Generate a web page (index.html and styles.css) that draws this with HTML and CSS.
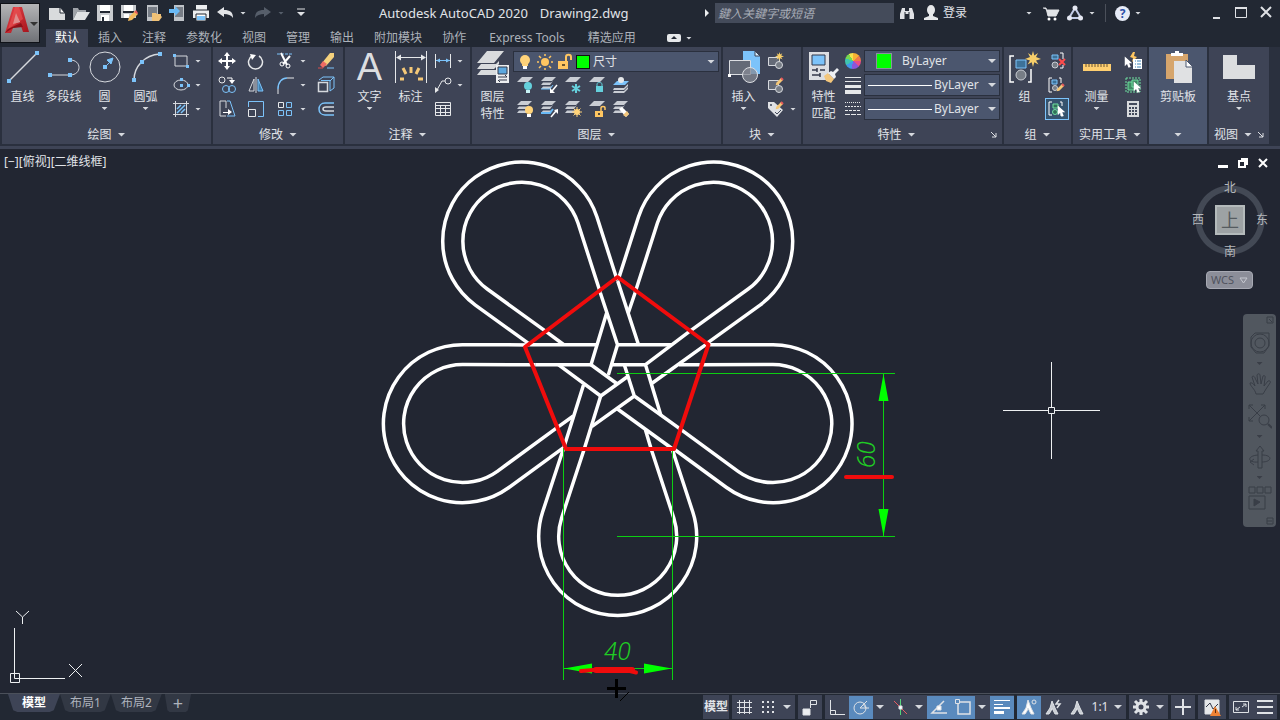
FILE: index.html
```html
<!DOCTYPE html>
<html lang="zh-CN">
<head>
    <meta charset="UTF-8">
    <title>Autodesk AutoCAD 2020 - Drawing2.dwg</title>
    <link rel="stylesheet" href="styles.css">
</head>
<body>
    <!-- Shared shapes -->
    <svg class="defs" aria-hidden="true">
        <defs>
            <linearGradient id="logoRed" x1="0" y1="0" x2="1" y2="1">
                <stop offset="0" stop-color="#e8444a"/>
                <stop offset="1" stop-color="#a5141c"/>
            </linearGradient>
            <symbol id="sheet" viewBox="0 0 18 18"><path d="M7 3h10l-4 5H3z" fill="#c9cdd4"/></symbol>
            <symbol id="sheets" viewBox="0 0 18 18">
                <path d="M5 1h11l-4 4H1zM3 6.500h8l2-1.500-3 4H1zM3 10.500h8l2-1.500-3 4H1z" fill="#c9cdd4"/>
            </symbol>
            <symbol id="pencil" viewBox="0 0 18 18">
                <path d="M4 14l1-4 7-7 3 3-7 7z" fill="#f5c877"/>
                <path d="M11 4l2-2 3 3-2 2z" fill="#e85c5c"/>
            </symbol>
            <symbol id="cursor" viewBox="0 0 12 16"><path d="M1 0v13l3-3 2 5 3-1-2-5h4z" fill="#fff"/></symbol>
            <symbol id="burst" viewBox="0 0 16 16">
                <path d="M8 0l1.300 4.500L13 2l-2 4 5 2-5 1.500 2.500 4-4.200-2.300L8 16l-1.300-4.800-4.200 2.300 2.500-4L0 8l5-2-2-4 3.700 2.500z" fill="#f8cf6a"/>
            </symbol>
            <symbol id="brush" viewBox="0 0 18 18">
                <path d="M2 10l4-3 6 6-3 4-5-2z" fill="#f3c67b"/>
                <path d="M6 7l3-2 2 1 4-4 2 2-4 4 1 3-2 2z" fill="#eef0f3"/>
            </symbol>
        </defs>
    </svg>

    <header class="header">
        <button class="app-button" aria-label="应用程序菜单">
            <svg width="38" height="38" viewBox="0 0 38 38">
                <path d="M12 3h9l7 25h-6l-2-6-8 2-2 5H4z" fill="url(#logoRed)"/>
                <path d="M15 9l-3 11 7-2z" fill="#c9c9c9"/>
                <path d="M14 3l-7 22 15-10-4-12z" fill="#f05a5a" opacity=".55"/>
                <path d="M7 25l13-6 2 4-10 1-8 5z" fill="#8e1118"/>
                <path d="M29 18h8l-4 4z" fill="#333"/>
            </svg>
        </button>
        <div class="header-main">
            <div class="titlebar">
                <div class="quick">
                    <button aria-label="新建"><svg viewBox="0 0 18 18"><path d="M1 4h11l5 5v7H1z" fill="#d9dbdd"/><path d="M12 3v6h5z" fill="#f5f5f5" stroke="#222833"/></svg></button>
                    <button aria-label="打开"><svg viewBox="0 0 18 18"><path d="M1 16V4h5l1 2h7v2H5z" fill="#9fa3a9"/><path d="M5 8h13l-5 8H1z" fill="#e0e2e4"/></svg></button>
                    <button aria-label="保存"><svg viewBox="0 0 18 18"><path d="M1 1h16v16H1z" fill="#c8cbcf"/><path d="M4 1h10v6H4zM5 11h8v6H5z" fill="#fff"/><path d="M4 8h10M7 13v4" stroke="#222833" stroke-width="2"/></svg></button>
                    <button aria-label="另存为"><svg viewBox="0 0 18 18"><path d="M1 1h15v13H1z" fill="#c8cbcf"/><path d="M4 1h9v6H4zM4 10h5v4H4z" fill="#fff"/><path d="M3 8h11" stroke="#222833" stroke-width="2"/><path d="M8 17l1-4 6-6 3 3-6 6z" fill="#f3b95d"/><path d="M14 8l2-2 2 3-1 1z" fill="#e85c5c"/></svg></button>
                    <button aria-label="从移动设备打开"><svg viewBox="0 0 18 18"><path d="M3 1h11v16H3z" fill="#bfc3c8"/><path d="M4 3h9v10H4z" fill="#777d86"/><path d="M8 17V9h4l1 1h4v2l1 1-3 4z" fill="#f0c177"/></svg></button>
                    <button aria-label="保存到移动设备"><svg viewBox="0 0 18 18"><path d="M6 1h10v16H6z" fill="#bfc3c8"/><path d="M7 3h8v10H7z" fill="#777d86"/><path d="M1 5h6V2l5 5-5 5V9H1z" fill="#69b9f5"/></svg></button>
                    <button aria-label="打印"><svg viewBox="0 0 18 18"><path d="M4 1h11v5H4zM1 6h16v8H1z" fill="#eceef0"/><path d="M1 6h16" stroke="#222833"/><path d="M4 10h10v7H4z" fill="#fff" stroke="#222833"/><path d="M5 12h8v4H5z" fill="#7cc3fa"/></svg></button>
                    <button aria-label="放弃"><svg viewBox="0 0 18 18"><path d="M1 8l7-5v3c6 0 9 2 9 8-2-3-5-4-9-4v3z" fill="#e3e5e8"/></svg></button>
                    <i class="caret"></i>
                    <button aria-label="重做"><svg viewBox="0 0 18 18"><path d="M17 8l-7-5v3C4 6 1 8 1 14c2-3 5-4 9-4v3z" fill="#565e6a"/></svg></button>
                    <i class="caret dim"></i>
                    <button aria-label="自定义快速访问工具栏"><svg viewBox="0 0 18 18"><path d="M5 5h8" stroke="#dfe1e5" stroke-width="1"/><path d="M5 8h8l-4 4z" fill="#dfe1e5"/></svg></button>
                </div>
                <div class="doc-title"><span>Autodesk AutoCAD 2020</span><span>Drawing2.dwg</span></div>
                <div class="search">
                    <i class="caret-right"></i>
                    <input type="text" placeholder="鍵入关鍵字或短语" aria-label="搜索">
                    <button aria-label="查找"><svg width="16" height="18" viewBox="0 0 16 18"><path d="M3 4h3v3h4V4h3l2 6v5h-5v-5H6v5H1v-5z" fill="#dfe1e5"/><path d="M6 8v7M10 8v7" stroke="#222833"/></svg></button>
                    <button class="login"><svg width="16" height="18" viewBox="0 0 16 18"><ellipse cx="8" cy="6" rx="4" ry="5" fill="#e6e8ea"/><path d="M6 9h4v3l5 2v2H1v-2l5-2z" fill="#e6e8ea"/></svg>登录</button>
                </div>
                <div class="account">
                    <i class="caret"></i>
                    <button aria-label="应用商店"><svg viewBox="0 0 18 18"><path d="M1 4h3l2 8h8l3-6H5" fill="#e2e4e7" stroke="#e2e4e7"/><circle cx="7" cy="15" r="1.500" fill="#fff"/><circle cx="13" cy="15" r="1.500" fill="#fff"/></svg></button>
                    <button aria-label="Autodesk A360"><svg viewBox="0 0 18 18"><path d="M9 4L3 14h12z" fill="none" stroke="#c2cbe8" stroke-width="2"/><circle cx="9" cy="4" r="2.500" fill="#e6e9f3"/><circle cx="3.500" cy="14" r="2.500" fill="#e6e9f3"/><circle cx="14.500" cy="14" r="2.500" fill="#e6e9f3"/></svg></button>
                    <i class="caret"></i>
                    <span class="divider"></span>
                    <button class="help" aria-label="帮助"><span>?</span></button>
                    <i class="caret"></i>
                </div>
                <div class="window-buttons">
                    <button aria-label="最小化"><svg viewBox="0 0 16 16"><path d="M5 13h7" stroke="#dfe1e5" stroke-width="2"/></svg></button>
                    <button aria-label="最大化"><svg viewBox="0 0 16 16"><path d="M2.500 3.500h11v9h-11z" fill="none" stroke="#dfe1e5"/><path d="M2 3h12" stroke="#dfe1e5" stroke-width="2"/></svg></button>
                    <button aria-label="关闭"><svg viewBox="0 0 16 16"><path d="M3 2l10 10M13 2L3 12" stroke="#dfe1e5" stroke-width="2"/></svg></button>
                </div>
            </div>
            <nav class="tabs">
                <a class="active" href="#">默认</a>
                <a href="#">插入</a>
                <a href="#">注释</a>
                <a href="#">参数化</a>
                <a href="#">视图</a>
                <a href="#">管理</a>
                <a href="#">输出</a>
                <a href="#">附加模块</a>
                <a href="#">协作</a>
                <a class="latin" href="#">Express Tools</a>
                <a href="#">精选应用</a>
                <button class="ribbon-toggle" aria-label="最小化功能区"><svg width="14" height="8" viewBox="0 0 14 8"><rect width="14" height="8" rx="2" fill="#e6e8ea"/><path d="M4 5h6L7 2z" fill="#222833"/></svg><i class="caret"></i></button>
            </nav>
        </div>
    </header>

    <div class="ribbon">
        <section class="panel">
            <div class="panel-body">
                <button class="big"><svg viewBox="0 0 32 32"><path d="M2 30L30 2" stroke="#d6d9de" stroke-width="1.500"/><path d="M0 28h4v4H0zM28 0h4v4h-4z" fill="#7cc3fa"/></svg>直线</button>
                <button class="big"><svg viewBox="0 0 32 32"><path d="M2 24h20M22 9c12 0 12 15 0 15" fill="none" stroke="#d6d9de"/><path d="M0 22h4v4H0zM20 22h4v4h-4zM20 7h4v4h-4z" fill="#7cc3fa"/></svg>多段线</button>
                <button class="big"><svg viewBox="0 0 32 32"><circle cx="16" cy="16" r="15" fill="none" stroke="#d6d9de"/><path d="M16 16l7-7M24 7l-2 6-4-4z" stroke="#7cc3fa" fill="#7cc3fa"/><path d="M14 14h4v4h-4z" fill="#7cc3fa"/></svg>圆<i class="caret"></i></button>
                <button class="big"><svg viewBox="0 0 32 32"><path d="M4 29C4 16 14 4 30 3" fill="none" stroke="#d6d9de" stroke-width="1.500"/><path d="M2 27h4v4H2zM10 9h4v4h-4zM28 1h4v4h-4z" fill="#7cc3fa"/></svg>圆弧<i class="caret"></i></button>
                <div class="tools wide">
                    <button aria-label="矩形"><svg viewBox="0 0 18 18"><path d="M3 4h12v10H3z" fill="none" stroke="#d6d9de"/><path d="M1 2h3v3H1zM14 13h3v3h-3z" fill="#7cc3fa"/></svg></button><i class="caret"></i>
                    <button aria-label="椭圆"><svg viewBox="0 0 18 18"><ellipse cx="9" cy="9" rx="7" ry="5" fill="none" stroke="#d6d9de"/><path d="M8 2h3v3H8zM8 8h3v3H8zM15 8h3v3h-3z" fill="#7cc3fa"/></svg></button><i class="caret"></i>
                    <button aria-label="图案填充"><svg viewBox="0 0 18 18"><path d="M3.500 1v16M14.500 1v16M1 3.500h16M1 14.500h16" stroke="#d6d9de"/><path d="M5 9l4-4M5 13l8-8M9 13l4-4" stroke="#7cc3fa" stroke-width="1.500"/></svg></button><i class="caret"></i>
                </div>
            </div>
            <button class="panel-title">绘图<i class="caret lg"></i></button>
        </section>

        <section class="panel">
            <div class="panel-body">
                <div class="tools modify">
                    <button aria-label="移动"><svg viewBox="0 0 18 18"><path d="M9 3v12M3 9h12" stroke="#fff" stroke-width="2"/><path d="M9 0l3 4H6zM9 18l3-4H6zM0 9l4-3v6zM18 9l-4-3v6z" fill="#fff"/></svg></button>
                    <button aria-label="旋转"><svg viewBox="0 0 18 18"><path d="M12 4a7 7 0 1 1-7 0" fill="none" stroke="#e6e8ea" stroke-width="1.500"/><path d="M3 2l6 1-4 5z" fill="#fff"/></svg></button>
                    <button aria-label="修剪"><svg viewBox="0 0 18 18"><path d="M1 2h16" stroke="#7cc3fa" stroke-dasharray="3 1"/><path d="M5 1l6 12M14 4L7 12" stroke="#fff" stroke-width="2"/><circle cx="12" cy="14" r="2" fill="none" stroke="#fff"/><circle cx="6" cy="12" r="2" fill="none" stroke="#fff"/></svg></button>
                    <i class="caret"></i>
                    <button aria-label="删除"><svg viewBox="0 0 18 18"><path d="M5 11l8-10h4v4L9 14z" fill="#f5d27d"/><path d="M6 9l-3 4 3 3 4-4z" fill="#ef6b64"/><path d="M1 16h5" stroke="#d94d4d"/><path d="M10 16h7" stroke="#7cc3fa"/></svg></button>

                    <button aria-label="复制"><svg viewBox="0 0 18 18"><g fill="none"><circle cx="4" cy="4" r="3" stroke="#e6e8ea"/><circle cx="8" cy="13" r="3.500" stroke="#7cc3fa"/><circle cx="14" cy="13" r="3.500" stroke="#7cc3fa"/><path d="M9 2h5v3" stroke="#fff"/></g><path d="M11 4h6l-3 4z" fill="#fff"/></svg></button>
                    <button aria-label="镜像"><svg viewBox="0 0 18 18"><path d="M7 3v12H2z" fill="none" stroke="#d6d9de"/><path d="M11 3v12h5z" fill="#3f7fae" stroke="#7cc3fa"/><path d="M9 1v16" stroke="#d6d9de"/></svg></button>
                    <button aria-label="圆角"><svg viewBox="0 0 18 18"><path d="M2 13C2 6 6 2 11 2" fill="none" stroke="#7cc3fa" stroke-width="1.500"/><path d="M2 13v5M11 2h7" stroke="#e6e8ea"/></svg></button>
                    <i class="caret"></i>
                    <button aria-label="分解"><svg viewBox="0 0 18 18"><path d="M1.500 6.500h9v9h-9z" fill="none" stroke="#d6d9de" stroke-width="1.500"/><path d="M2 4l4-3h11v11l-4 3V5l4-4M4 4.500h9" fill="none" stroke="#7cc3fa"/></svg></button>

                    <button aria-label="拉伸"><svg viewBox="0 0 18 18"><path d="M8 1H2v15h6M8 1v7" fill="none" stroke="#d6d9de"/><path d="M9 1h3l5 15H9" fill="none" stroke="#7cc3fa"/><path d="M5 12h5V9l4 3-4 3v-2H5z" fill="#fff"/></svg></button>
                    <button aria-label="缩放"><svg viewBox="0 0 18 18"><path d="M1.500 9.500h7v7h-7z" fill="none" stroke="#e6e8ea"/><path d="M1.500 7V1.500h15v15H11" fill="none" stroke="#7cc3fa"/></svg></button>
                    <button aria-label="阵列"><svg viewBox="0 0 18 18"><g fill="none"><path d="M2.500 2.500h5v5h-5z" stroke="#e6e8ea"/><path d="M10.500 2.500h5v5h-5zM2.500 10.500h5v5h-5zM10.500 10.500h5v5h-5z" stroke="#7cc3fa"/></g></svg></button>
                    <i class="caret"></i>
                    <button aria-label="偏移"><svg viewBox="0 0 18 18"><path d="M17 3H8C0 3 0 15 8 15h9" fill="none" stroke="#7cc3fa" stroke-width="1.500"/><path d="M17 7H9c-4 0-4 4 0 4h8" fill="none" stroke="#d6d9de" stroke-width="1.500"/></svg></button>
                </div>
            </div>
            <button class="panel-title">修改<i class="caret lg"></i></button>
        </section>

        <section class="panel">
            <div class="panel-body annotate">
                <button class="big"><span class="big-a">A</span>文字<i class="caret"></i></button>
                <button class="big"><svg viewBox="0 0 32 32"><path d="M.5 0v32M31.500 0v32M2 6.500h28" stroke="#e6e8ea"/><path d="M1 6.500l5-3v6zM31 6.500l-5-3v6z" fill="#e6e8ea"/><path d="M16 22v-6M11 23l-3-6M21 23l3-6M9 28H5M23 28h5" stroke="#f5c877" stroke-width="3"/></svg>标注</button>
                <div class="tools wide">
                    <button aria-label="线性"><svg viewBox="0 0 18 18"><path d="M1.500 2v14M16.500 2v14" stroke="#e6e8ea"/><path d="M2 8.500h14" stroke="#7cc3fa"/><path d="M2 8.500l4-2v4zM16 8.500l-4-2v4z" fill="#7cc3fa"/></svg></button><i class="caret"></i>
                    <button aria-label="引线"><svg viewBox="0 0 18 18"><circle cx="14" cy="5" r="3" fill="none" stroke="#e6e8ea"/><path d="M11 5H8l-5 9" fill="none" stroke="#e6e8ea"/><path d="M1 17V11l4 3z" fill="#e6e8ea"/></svg></button><i class="caret"></i>
                    <button aria-label="表格"><svg viewBox="0 0 18 18"><path d="M1.500 2.500h15v13h-15zM2 5.500h14M2 8.500h14M2 12.500h14M6.500 6v10M11.500 6v10" fill="none" stroke="#e6e8ea"/></svg></button>
                </div>
            </div>
            <button class="panel-title">注释<i class="caret lg"></i></button>
        </section>

        <section class="panel">
            <div class="panel-body layers">
                <button class="big"><svg viewBox="0 0 32 32"><path d="M10 0h17L17 12H0zM4 13h15l3-3v3l-5 5H0zM4 19h15v5H0z" fill="#d9dbdd"/><path d="M19 14h13v18H19z" fill="#eceef0"/><path d="M21 16h9v7h-9z" fill="#5da8df" stroke="#33394a"/><path d="M21 26h9M22 29h8M28 24l2 2M23 31l-2-2" stroke="#33394a"/></svg>图层<br>特性</button>
                <div class="layer-tools">
                    <label class="combo">
                        <svg width="16" height="18" viewBox="0 0 16 18"><circle cx="8" cy="7" r="5" fill="#ffd37a"/><path d="M5 10h6v3H5z" fill="#ffd37a"/><path d="M6 13h4v3H6z" fill="#fff"/></svg>
                        <svg width="18" height="18" viewBox="0 0 18 18"><circle cx="9" cy="9" r="4" fill="#ffc661"/><path d="M9 1v2M9 15v2M1 9h2M15 9h2M3 3l2 2M13 13l2 2M15 3l-2 2M3 15l2-2" stroke="#ffc661" stroke-width="1.500"/></svg>
                        <svg width="16" height="18" viewBox="0 0 16 18"><path d="M9 9V4c0-3 5-3 5 0v3" fill="none" stroke="#ffc661" stroke-width="2"/><path d="M1 8h10v8H1z" fill="#ffc661"/><path d="M5 11h3v2H5z" fill="#6b5530"/></svg>
                        <span class="swatch"></span>
                        <select aria-label="图层"><option>尺寸</option></select>
                        <i class="caret lg"></i>
                    </label>
                    <div class="tools layer-grid">
                        <button aria-label="关"><svg viewBox="0 0 18 18"><path d="M6 1h11l-5 5H1z" fill="#c9cdd4"/><circle cx="12" cy="10" r="4" fill="#65d0dc"/><path d="M10 14h4v3h-4z" fill="#c8f3f6"/></svg></button>
                        <button aria-label="隔离"><svg viewBox="0 0 18 18"><use href="#sheets"/><path d="M1 13h9l3-4" fill="none" stroke="#69b9f5"/><path d="M17 9l-5 6" stroke="#fff" stroke-width="1.500"/><path d="M10 12v5h5z" fill="#fff"/></svg></button>
                        <button aria-label="冻结"><svg viewBox="0 0 18 18"><path d="M6 1h11l-5 5H1z" fill="#c9cdd4"/><path d="M12 8v9M8 10l8 5M16 10l-8 5" stroke="#65d0dc" stroke-width="2"/></svg></button>
                        <button aria-label="锁定"><svg viewBox="0 0 18 18"><path d="M6 1h11l-5 5H1z" fill="#c9cdd4"/><path d="M9 11V8c0-2 5-2 5 0v3" fill="none" stroke="#65d0dc"/><path d="M8 10h7v6H8z" fill="#65d0dc"/></svg></button>
                        <button aria-label="置为当前"><svg viewBox="0 0 18 18"><path d="M5 5h12l-4 4H1z" fill="#7cc3fa"/><path d="M2 12h10l4-4v2l-4 4H1zM2 15h10l4-4v2l-4 4H1z" fill="#c9cdd4"/><circle cx="9" cy="4" r="3" fill="#e6e8ea"/></svg></button>
                        <button aria-label="打开所有图层"><svg viewBox="0 0 18 18"><use href="#sheets"/><circle cx="13" cy="10" r="4" fill="#ffd37a"/><path d="M11 14h4v3h-4z" fill="#fff"/></svg></button>
                        <button aria-label="取消隔离"><svg viewBox="0 0 18 18"><use href="#sheets"/><path d="M1 13h9l3-4" fill="none" stroke="#69b9f5" stroke-width="2"/><path d="M11 17l5-6" stroke="#fff" stroke-width="1.500"/><path d="M18 9v5l-4-4z" fill="#fff"/></svg></button>
                        <button aria-label="解冻"><svg viewBox="0 0 18 18"><use href="#sheets"/><circle cx="13" cy="12" r="3" fill="#ffd37a"/><path d="M13 7v10M8 12h10M9.500 8.500l7 7M16.500 8.500l-7 7" stroke="#ffd37a"/></svg></button>
                        <button aria-label="解锁"><svg viewBox="0 0 18 18"><path d="M6 1h11l-5 5H1z" fill="#c9cdd4"/><path d="M13 11V8c0-2 4-2 4 0v2" fill="none" stroke="#ffc661" stroke-width="1.500"/><path d="M7 11h8v6H7z" fill="#ffc661"/><path d="M10 13h2v2h-2z" fill="#554b38"/></svg></button>
                        <button aria-label="匹配图层"><svg viewBox="0 0 18 18"><use href="#sheets"/><path d="M7 9l3-2 7 7-3 3z" fill="#fff"/><path d="M11 15l4-4 2 3-3 3z" fill="#f3c67b"/></svg></button>
                    </div>
                </div>
            </div>
            <button class="panel-title">图层<i class="caret lg"></i></button>
        </section>

        <section class="panel">
            <div class="panel-body">
                <button class="big"><svg viewBox="0 0 32 32"><path d="M15 0h12l5 5v18H15z" fill="#7cc3fa"/><path d="M27 0v5h5z" fill="#d9effe" stroke="#3e4456"/><path d="M1.500 9.500h21v14h-21z" fill="#646a77" stroke="#dcdee2"/><circle cx="22" cy="24" r="7.500" fill="#858a94" fill-opacity=".75" stroke="#dcdee2"/><path d="M0 23h3v3H0z" fill="#fff"/></svg>插入<i class="caret"></i></button>
                <div class="tools block-tools">
                    <button aria-label="创建块"><svg viewBox="0 0 18 18"><path d="M1.500 5.500h11v8h-11z" fill="#646a77" stroke="#d6d9de"/><circle cx="12" cy="13" r="3.500" fill="#777d86" stroke="#d6d9de"/><use href="#burst" x="8" y="0" width="9" height="9"/></svg></button><i></i>
                    <button aria-label="块编辑器"><svg viewBox="0 0 18 18"><path d="M1.500 4.500h10v9h-10z" fill="#646a77" stroke="#d6d9de"/><circle cx="12" cy="13" r="3.500" fill="#777d86" stroke="#d6d9de"/><use href="#pencil" x="6" y="0" width="12" height="12"/></svg></button><i></i>
                    <button aria-label="编辑属性"><svg viewBox="0 0 18 18"><path d="M1 2h6l9 8-6 7-9-9z" fill="#e0e2e5"/><circle cx="4" cy="5" r="1" fill="#3e4456"/><path d="M8 12l2 2 4-4" fill="none" stroke="#444b5c"/><use href="#pencil" x="6" y="0" width="12" height="12"/></svg></button><i class="caret"></i>
                </div>
            </div>
            <button class="panel-title">块<i class="caret lg"></i></button>
        </section>

        <section class="panel">
            <div class="panel-body properties">
                <button class="big"><svg viewBox="0 0 32 32"><path d="M1 1h20v28H1z" fill="#dcdee2"/><path d="M4 4h13v10H4z" fill="#7cc3fa" stroke="#33394a"/><path d="M4 19h5M12 19h5M4 24h8M9 17v4M12 22v4" stroke="#33394a" stroke-width="1.500"/><use href="#brush" x="14" y="15" width="18" height="18"/></svg>特性<br>匹配</button>
                <div class="prop-list">
                    <span class="wheel"></span>
                    <label class="combo">
                        <span class="swatch grey"></span>
                        <select aria-label="对象颜色"><option>ByLayer</option></select><i class="caret lg"></i>
                    </label>
                    <svg width="16" height="18" viewBox="0 0 16 18"><path d="M0 1.500h16M0 5.500h16" stroke="#e6e8ea"/><path d="M0 10.500h16" stroke="#e6e8ea" stroke-width="3"/><path d="M0 16h16" stroke="#e6e8ea" stroke-width="4"/></svg>
                    <label class="combo">
                        <span class="rule"></span>
                        <select aria-label="线宽"><option>ByLayer</option></select><i class="caret lg"></i>
                    </label>
                    <svg width="16" height="18" viewBox="0 0 16 18"><path d="M0 2.500h16" stroke="#e6e8ea" stroke-dasharray="1 1"/><path d="M0 6.500h16" stroke="#e6e8ea" stroke-dasharray="2 1"/><path d="M0 10.500h16" stroke="#e6e8ea" stroke-dasharray="3 1"/><path d="M0 14.500h16" stroke="#e6e8ea" stroke-dasharray="5 1"/></svg>
                    <label class="combo">
                        <span class="rule"></span>
                        <select aria-label="线型"><option>ByLayer</option></select><i class="caret lg"></i>
                    </label>
                </div>
            </div>
            <div class="panel-foot">
                <button class="panel-title">特性<i class="caret lg"></i></button>
                <button class="launcher" aria-label="特性选项板"><svg width="8" height="8" viewBox="0 0 8 8"><path d="M1 1l5 5M6 2v4H2" fill="none" stroke="#dfe1e5"/></svg></button>
            </div>
        </section>

        <section class="panel">
            <div class="panel-body">
                <button class="big"><svg viewBox="0 0 32 32"><path d="M5 5H1v26h4M19 31h3V18" fill="none" stroke="#fff" stroke-width="1.500"/><path d="M7 9h10v8H7z" fill="#3d7299" stroke="#7cc3fa"/><circle cx="12" cy="24" r="5" fill="#777d86" stroke="#c9cdd4"/><use href="#burst" x="16" y="0" width="16" height="16"/></svg>组</button>
                <div class="tools">
                    <button aria-label="解除编组"><svg viewBox="0 0 18 18"><path d="M4 3h6v4H4z" fill="#3d7299" stroke="#7cc3fa"/><circle cx="7" cy="13" r="3" fill="#777d86" stroke="#c9cdd4"/><path d="M12 1h3v6M15 13v3h-3" fill="none" stroke="#fff"/><path d="M11 7l6 6M17 7l-6 6" stroke="#ff4c4c" stroke-width="2"/></svg></button>
                    <button aria-label="组编辑"><svg viewBox="0 0 18 18"><path d="M4 2H1v14h3M11 2h2v5" fill="none" stroke="#fff"/><path d="M4 4h5v4H4z" fill="#3d7299" stroke="#7cc3fa"/><circle cx="7" cy="12" r="2.500" fill="#777d86" stroke="#c9cdd4"/><use href="#pencil" x="6" y="6" width="12" height="12"/></svg></button>
                    <button class="on" aria-label="启用组选择"><svg viewBox="0 0 18 18"><path d="M4 2H1v13h3M12 2h2v4M12 15h2" fill="none" stroke="#fff"/><path d="M5 4h5v4H5z" fill="#32705a" stroke="#6fe0a0"/><circle cx="7" cy="12" r="2.500" fill="#32705a" stroke="#6fe0a0"/><use href="#cursor" x="9" y="5" width="9" height="13"/></svg></button>
                </div>
            </div>
            <button class="panel-title">组<i class="caret lg"></i></button>
        </section>

        <section class="panel">
            <div class="panel-body utility">
                <button class="big"><svg viewBox="0 0 32 32"><path d="M2 13h28v7H2z" fill="#ffcf70"/><path d="M5 13v3M8 13v3M11 13v3M14 13v3M17 13v3M20 13v3M23 13v3M26 13v3" stroke="#6b5530"/></svg>测量<i class="caret"></i></button>
                <div class="tools">
                    <button aria-label="快速选择"><svg viewBox="0 0 18 18"><path d="M9 0L6 5l3 1-1 4 5-5-3-1 1-4z" fill="#ffc661"/><use href="#cursor" x="0" y="4" width="9" height="13"/><path d="M9 7h9v10H9z" fill="#fff"/><path d="M11 9h1M11 12h1M11 15h1M13 9h4M13 12h4M13 15h4" stroke="#3d84b8"/></svg></button>
                    <button aria-label="全部选择"><svg viewBox="0 0 18 18"><path d="M2 2h14v14H2z" fill="none" stroke="#6fe0a0" stroke-dasharray="2 1"/><path d="M4 6h7v8H4z" fill="#408a64" stroke="#6fe0a0"/><path d="M8 4h6v7H8z" fill="#408a64" stroke="#6fe0a0"/><use href="#cursor" x="9" y="5" width="9" height="13"/></svg></button>
                    <button aria-label="快速计算器"><svg viewBox="0 0 18 18"><path d="M3 1h12v16H3z" fill="#d9dbdd"/><path d="M5 3h8v2H5z" fill="#444b5c"/><path d="M5 8h8M5 11h8M5 14h8" stroke="#444b5c" stroke-width="2" stroke-dasharray="2 1"/></svg></button>
                </div>
            </div>
            <button class="panel-title">实用工具<i class="caret lg"></i></button>
        </section>

        <section class="panel clip">
            <div class="panel-body">
                <button class="big"><svg viewBox="0 0 32 32"><path d="M4 3h22v25H4z" fill="#d6a56c"/><path d="M9 2h4V0h4v2h4v3H9z" fill="#fff"/><path d="M12 10h12l6 6v16H12z" fill="#e0e1e3"/><path d="M24 9v7h7z" fill="#fff" stroke="#4b566e"/></svg>剪贴板</button>
            </div>
            <button class="panel-title" aria-label="剪贴板选项"><i class="caret lg"></i></button>
        </section>

        <section class="panel">
            <div class="panel-body">
                <button class="big"><svg viewBox="0 0 32 32"><path d="M0 4h14v10h18v14H0z" fill="#dcdee0"/></svg>基点<i class="caret"></i></button>
            </div>
            <div class="panel-foot">
                <button class="panel-title">视图<i class="caret lg"></i></button>
                <button class="launcher" aria-label="视图设置"><svg width="8" height="8" viewBox="0 0 8 8"><path d="M1 1l5 5M6 2v4H2" fill="none" stroke="#dfe1e5"/></svg></button>
            </div>
        </section>
    </div>

    <main class="viewport">
        <svg class="drawing" viewBox="0 149 1280 544" role="img" aria-label="Drawing2">
            <defs>
                <g id="loop">
                    <path d="M563.500 448.500L542.600 512A79 79 0 1 0 692.800 512L672 448.500"/>
                    <path d="M584.400 448.500L561.600 518A59 59 0 1 0 673.800 518L651 448.500"/>
                </g>
            </defs>

            <!-- Knot -->
            <g class="curve">
                <use href="#loop"/>
                <use href="#loop" transform="rotate(72 617.700 373.200)"/>
                <use href="#loop" transform="rotate(144 617.700 373.200)"/>
                <use href="#loop" transform="rotate(216 617.700 373.200)"/>
                <use href="#loop" transform="rotate(288 617.700 373.200)"/>
                <path d="M529.600 344.700H597M617.500 344.700H672"/>
                <path d="M535.800 364.700H591M612 364.700H645.500M679 364.700H699.600"/>
                <path d="M600.300 292.700L617.500 344.700L608.300 375M617.700 281L638.500 344.700"/>
                <path d="M635.100 292.700L628.300 312.700M606.700 312.700L591 364.700L616.700 383.500"/>
                <path d="M558.300 364.700L600.700 396L627.700 376.500M546.500 331.900L563.500 344.500"/>
                <path d="M705.800 344.700L651.700 383.500M688.900 331.900L645.500 364.700L661 415.700"/>
                <path d="M624.300 364.700L634.300 396L591.700 426.700M634.300 396L679 428.100"/>
                <path d="M563.500 448.500L583.500 385M584.400 448.500L600.700 396"/>
                <path d="M556.400 428.100L573.300 416M672 448.500L617.500 409M651 448.500L645.500 430"/>
            </g>

            <!-- Dimensions -->
            <g class="dim">
                <path d="M617 373.500H895M617 536.500H895M883.500 374V536M563.500 448V680M672.500 448V680M564 668.500H672"/>
                <path class="arrow" d="M883.500 374l5 27h-10zM883.500 536l5-27h-10zM564 668.500l28-5v10zM672 668.500l-28-5v10z"/>
                <text x="604" y="660">40</text>
                <text transform="translate(875 468) rotate(-90)">60</text>
            </g>

            <!-- Markup -->
            <path class="marker" d="M617.500 277L708.500 344.500L674 449H566L525 347Z"/>
            <path class="marker" d="M846 477H892"/>
            <path class="marker heavy" d="M596 670H632"/>
            <path class="marker" d="M581 671L600 669.500M630 671L636 672.500"/>

            <!-- Crosshair and pen cursor -->
            <g class="thin">
                <path d="M1003 410.500H1048M1055 410.500H1100M1051.500 362V407M1051.500 414V459M1048.500 407.500h6v6h-6z"/>
                <path d="M14.500 628V678.500H65M10.500 673.500h9v9h-9z"/>
                <path d="M16 611l6.500 6v7M29 611l-6.500 6M69 664l13 13M82 664L69 677"/>
            </g>
            <path d="M607 688.500H626M616.500 679V698" stroke="#000" stroke-width="3"/>
            <path d="M620 701l9-9" stroke="#000"/>
        </svg>

        <div class="view-label">[−][俯视][二维线框]</div>
        <div class="view-window">
            <button aria-label="最小化视图"><svg width="12" height="12" viewBox="0 0 12 12"><path d="M1 9.500h10" stroke="#fff" stroke-width="3"/></svg></button>
            <button aria-label="还原视图"><svg width="12" height="12" viewBox="0 0 12 12"><path d="M2 4h6v6H2zM4 2h6v6" fill="none" stroke="#fff" stroke-width="2"/></svg></button>
            <button aria-label="关闭视图"><svg width="12" height="12" viewBox="0 0 12 12"><path d="M2 2l8 8M10 2l-8 8" stroke="#fff" stroke-width="2"/></svg></button>
        </div>
        <div class="viewcube">
            <span class="north">北</span>
            <span class="west">西</span>
            <button class="face">上</button>
            <span class="east">东</span>
            <span class="south">南</span>
        </div>
        <button class="wcs">WCS<svg width="9" height="7" viewBox="0 0 9 7"><path d="M1 1h7L4.500 6z" fill="none" stroke="#c6c8d0"/></svg></button>
        <div class="navbar">
            <svg class="corner" width="8" height="8" viewBox="0 0 8 8"><path d="M1 1h6v6H1zM3 3l3 3" fill="none"/></svg>
            <button aria-label="导航控制盘"><svg width="24" height="26" viewBox="0 0 24 26"><path d="M3 7l4-4h14v13l-5 7H8l-5-6z" fill="none"/><circle cx="12" cy="13" r="9" fill="none"/><circle cx="12" cy="13" r="5" fill="none"/></svg></button>
            <i class="caret"></i>
            <button aria-label="平移"><svg width="24" height="26" viewBox="0 0 24 26"><path d="M8 23C7 18 2 15 2 12c2-1 4 2 5 3L4 6c1-2 3 0 3 1l3 6-1-9c1-2 3-1 3 0l1 9 2-8c1-1 3 0 2 2l-1 8 4-5c2-1 3 1 2 2l-4 6-3 5z" fill="none"/></svg></button>
            <button aria-label="缩放"><svg width="24" height="26" viewBox="0 0 24 26"><path d="M1 2l16 16M17 2L1 18M1 6V2h4M13 2h4v4M1 14v4h4" fill="none"/><circle cx="16" cy="17" r="5" fill="#51575f"/><path d="M20 21l4 4" stroke-width="2"/></svg></button>
            <i class="caret"></i>
            <button aria-label="动态观察"><svg width="24" height="26" viewBox="0 0 24 26"><path d="M10 7L8 7l4-5 4 5h-2v17h-4zM10 11C-2 12 0 19 10 18M14 11c11 0 10 7 0 7M6 15l-4 3 4 3" fill="none"/></svg></button>
            <i class="caret"></i>
            <button aria-label="ShowMotion"><svg width="24" height="26" viewBox="0 0 24 26"><path d="M1 2h6v6H1zM9 2h6v6H9zM17 2h6v6h-6zM1 11h16v13H1z" fill="none"/><path d="M6 14v7l6-4z" fill="#393e47"/></svg></button>
            <svg class="corner" width="8" height="8" viewBox="0 0 8 8"><path d="M1 1h6v6H1zM1 4h5" fill="none"/></svg>
        </div>
    </main>

    <footer class="statusbar">
        <nav class="layouts">
            <a class="active" href="#">模型</a>
            <a href="#">布局1</a>
            <a href="#">布局2</a>
            <button aria-label="新建布局">+</button>
        </nav>
        <div class="status-tools">
            <div class="group"><button class="text model">模型</button></div>
            <div class="group">
                <button aria-label="栅格"><svg viewBox="0 0 18 18"><path d="M4.500 2v14M9.500 2v14M14.500 2v14M2 4.500h15M2 9.500h15M2 14.500h15"/></svg></button>
                <button aria-label="捕捉"><svg viewBox="0 0 18 18"><path d="M3 4h12M3 9h12M3 14h12" stroke-width="2" stroke-dasharray="2 3"/></svg></button>
                <i class="caret lg"></i>
            </div>
            <div class="group"><button aria-label="推断约束"><svg viewBox="0 0 18 18"><path d="M9.500 10V2.500h6v4h-6"/><path d="M2 11h7v6H2z" fill="#eceef0"/></svg></button></div>
            <div class="group">
                <button aria-label="正交"><svg viewBox="0 0 18 18"><path d="M2.500 2v14.500H17M3 12.500h4.500v4"/></svg></button>
                <button class="on" aria-label="极轴追踪"><svg viewBox="0 0 18 18"><circle cx="8" cy="10" r="6"/><path d="M8 10h9M8 10l7-7M11 6l3 4"/></svg></button>
                <i class="caret lg"></i>
                <button aria-label="等轴测草图"><svg viewBox="0 0 18 18"><path d="M3 3l13 13" stroke="#e95d65"/><path d="M9.500 1v16" stroke="#56d37b"/><path d="M8 8h3v3H8z" fill="#fff"/></svg></button>
                <i class="caret lg"></i>
                <button class="on" aria-label="对象捕捉追踪"><svg viewBox="0 0 18 18"><path d="M17 15H2L14 3" stroke-width="1.500"/><path d="M7 8h4v4H7z" fill="#fff"/></svg></button>
                <button class="on" aria-label="对象捕捉"><svg viewBox="0 0 18 18"><path d="M4 6v10h12V4H6" stroke-width="1.500"/><path d="M1.500 1.500h4v4h-4z" fill="#5a8abd"/></svg></button>
                <i class="caret lg"></i>
                <button class="on" aria-label="线宽"><svg viewBox="0 0 18 18"><path d="M1 2.500h16M1 6.500h9" stroke="#fff"/><path d="M1 10h16" stroke="#fff" stroke-width="2"/><path d="M1 14.500h10" stroke="#fff" stroke-width="3"/></svg></button>
            </div>
            <div class="group">
                <button class="on" aria-label="注释可见性"><svg viewBox="0 0 18 18"><path d="M8 2l3 8 3 6H11l-2-4-1-2-1 3-2 3H2l4-6z" fill="#fff"/><circle cx="14" cy="4" r="2"/></svg></button>
                <button aria-label="自动缩放"><svg viewBox="0 0 18 18"><path d="M8 3l3 7 3 6H11l-2-4-1-2-1 3-2 3H2l4-6z" fill="#c9cdd4"/><path d="M15 2l-3 4h4l-3 4" stroke-width="1.500"/></svg></button>
                <button aria-label="注释比例"><svg viewBox="0 0 18 18"><path d="M9 3l3 7 3 6h-3l-2-4-1-2-1 3-2 3H3l4-6z" fill="#c9cdd4"/></svg></button>
                <button class="text scale">1:1</button>
                <i class="caret lg"></i>
            </div>
            <div class="group">
                <button aria-label="切换工作空间"><svg viewBox="0 0 18 18"><circle cx="9" cy="9" r="4" stroke-width="3"/><path d="M9 1v3M9 14v3M1 9h3M14 9h3M3 3l3 3M12 12l3 3M15 3l-3 3M6 12l-3 3" stroke-width="3"/></svg></button>
                <i class="caret lg"></i>
            </div>
            <div class="group"><button aria-label="注释监视器"><svg viewBox="0 0 18 18"><path d="M9 1v16M1 9h16" stroke-width="2"/></svg></button></div>
            <div class="group wide"><button aria-label="硬件加速"><svg viewBox="0 0 18 18"><path d="M2 2h14v14H2z" fill="#e6e8ea"/><path d="M3 9l4-4 3 6 5-5" stroke="#33394a"/><path d="M12 8l6 10H7z" fill="#ef8234" stroke="none"/><path d="M12.500 11v4" stroke="#5d2b0b"/></svg></button></div>
            <div class="group">
                <button aria-label="全屏显示"><svg viewBox="0 0 18 18"><path d="M1.500 3.500h15v11h-15zM4 12l4-3M14 6l-4 3M4 9v3h3M14 9V6h-3"/></svg></button>
                <button aria-label="自定义"><svg viewBox="0 0 18 18"><path d="M1 3h16M1 9h16M1 15h16" stroke-width="2"/></svg></button>
            </div>
        </div>
    </footer>
</body>
</html>
```
FILE: styles.css
```css
:root {
    --bg: #222833;
    --canvas: #222632;
    --panel: #3e4456;
    --field: #4b566e;
    --edge: #2a303e;
    --text: #e0e3e8;
    --muted: #adb2ba;
    --blue: #5a8abd;
    --green: #00ff00;
    --red: #f00c0c;
}

* {
    box-sizing: border-box;
}

body {
    margin: 0;
    height: 100vh;
    display: flex;
    flex-direction: column;
    overflow: hidden;
    background: var(--bg);
    color: var(--text);
    font: 12px/16px "Noto Sans", "Noto Sans CJK SC", sans-serif;
}

button,
input,
select {
    font: inherit;
    color: inherit;
}

button {
    padding: 0;
    border: 0;
    background: none;
}

svg {
    display: block;
}

a {
    color: inherit;
    text-decoration: none;
}

.defs {
    position: absolute;
    width: 0;
    height: 0;
}

.caret {
    flex: none;
    width: 6px;
    height: 3px;
    background: #d6d9de;
    clip-path: polygon(0 0, 100% 0, 50% 100%);
}

.caret.lg {
    width: 8px;
    height: 4px;
}

.caret.dim {
    background: #565e6a;
}

/* Title bar and tabs */
.header {
    display: flex;
    height: 47px;
}

.app-button {
    width: 40px;
    height: 40px;
    margin: 3px 6px 0 0;
    border: 1px solid #0f1218;
    background: linear-gradient(#b4b5b7, #707277);
}

.header-main {
    flex: 1;
    display: flex;
    flex-direction: column;
}

.titlebar {
    height: 26px;
    display: flex;
    align-items: center;
}

.quick,
.account,
.window-buttons,
.search {
    display: flex;
    align-items: center;
}

.quick button {
    width: 18px;
    margin: 0 4px 0 2px;
}

.quick button svg,
.account button svg {
    width: 18px;
    height: 18px;
}

.quick .caret + button {
    margin-left: 6px;
}

.quick .caret {
    margin: 0 2px;
}

.doc-title {
    display: flex;
    gap: 12px;
    margin-left: 65px;
    font-size: 13px;
    white-space: nowrap;
}

.search {
    margin-left: auto;
}

.caret-right {
    width: 4px;
    height: 8px;
    margin-right: 6px;
    background: #eceef0;
    clip-path: polygon(0 0, 100% 50%, 0 100%);
}

.search input {
    width: 179px;
    height: 20px;
    padding: 0 3px;
    border: 0;
    background: #444b5a;
    outline: 0;
}

.search input::placeholder {
    color: #a8adb7;
    font-style: italic;
    opacity: 1;
}

.search button {
    margin-left: 5px;
}

.login {
    display: flex;
    align-items: center;
    gap: 4px;
}

.search .login {
    margin-left: 8px;
}

.account {
    margin-left: 60px;
    gap: 6px;
}

.account .caret + button {
    margin-left: 4px;
}

.account .caret {
    margin-left: -1px;
}

.divider {
    width: 1px;
    height: 18px;
    margin: 0 3px 0 4px;
    background: #4b505a;
}

.help {
    width: 15px;
    height: 15px;
    border-radius: 50%;
    background: #e6ebf7;
    color: #2c4fa8;
    font-weight: 700;
    line-height: 15px;
}

.window-buttons {
    gap: 9px;
    margin: 0 6px 0 67px;
}

.window-buttons svg {
    width: 16px;
    height: 16px;
}

.tabs {
    flex: 1;
    display: flex;
    padding-top: 3px;
    color: var(--muted);
}

.tabs a {
    padding: 0 10px;
    line-height: 18px;
    white-space: nowrap;
}

.tabs .active {
    padding: 0 9px;
    background: var(--panel);
    color: #fff;
}

.tabs .latin {
    padding: 0 13px;
}

.ribbon-toggle {
    display: flex;
    align-items: center;
    gap: 5px;
    margin-left: 21px;
}

/* Ribbon */
.ribbon {
    display: grid;
    grid-template-columns:
        minmax(0, 209fr) minmax(0, 130fr) minmax(0, 125fr) minmax(0, 249fr) minmax(0, 78fr)
        minmax(0, 199fr) minmax(0, 67fr) minmax(0, 74fr) minmax(0, 58fr) minmax(0, 60fr);
    gap: 2px;
    padding: 0 11px 2px 2px;
    background: var(--edge);
    border-bottom: 3px solid var(--panel);
}

.panel {
    display: flex;
    flex-direction: column;
    background: var(--panel);
}

.panel.clip {
    background: var(--field);
}

.panel-body {
    display: flex;
    height: 78px;
    padding-top: 2px;
}

.panel.clip .panel-body,
.panel:last-child .panel-body {
    justify-content: center;
}

.panel-title {
    flex: 1;
    display: flex;
    align-items: center;
    justify-content: center;
    gap: 6px;
    height: 19px;
    line-height: 19px;
    white-space: nowrap;
}

.panel-foot {
    display: flex;
    align-items: center;
}

.launcher {
    padding-right: 4px;
}

.big {
    flex: none;
    display: flex;
    flex-direction: column;
    align-items: center;
    width: 41px;
    padding-top: 2px;
    line-height: 17px;
    white-space: nowrap;
}

.big svg {
    width: 32px;
    height: 32px;
    margin-bottom: 5px;
}

.big .caret {
    margin-top: 2px;
}

.big-a {
    height: 37px;
    font: 38px/32px "Liberation Sans", sans-serif;
    color: #dcdee0;
}

.tools {
    display: grid;
    grid-auto-rows: 24px;
    grid-template-columns: 24px;
    align-items: center;
    justify-items: center;
}

.tools.wide {
    grid-template-columns: 24px 10px;
    margin-left: 3px;
}

.tools.modify {
    grid-template-columns: 28px 29px 29px 8px 38px;
}

.tools.block-tools {
    grid-template-columns: 24px 10px;
}

.tools button svg {
    width: 18px;
    height: 18px;
}

.tools .on {
    width: 24px;
    height: 22px;
    display: grid;
    place-items: center;
    border: 1px solid #7cc3fa;
    background: #35536e;
}

.annotate {
    padding-left: 4px;
}

.annotate .tools {
    margin-left: 0;
}

.utility {
    padding-left: 3px;
    gap: 4px;
}

.layer-tools {
    flex: 1;
    padding: 2px 2px 0 0;
}

.tools.layer-grid {
    grid-template-columns: repeat(5, 24px);
    padding-top: 1px;
}

.combo {
    display: flex;
    align-items: center;
    height: 22px;
    padding: 0 3px;
    background: var(--field);
    border: 1px solid var(--edge);
}

.layer-tools .combo {
    gap: 3px;
    height: 21px;
}

.combo select {
    flex: 1;
    min-width: 0;
    padding: 0;
    border: 0;
    background: none;
    appearance: none;
}

.swatch {
    width: 14px;
    height: 14px;
    border: 1px solid #111;
    background: var(--green);
}

.swatch.grey {
    width: 16px;
    height: 16px;
    margin: 0 10px 0 8px;
    border-color: #8b929f;
}

.rule {
    width: 64px;
    height: 1px;
    margin-right: 2px;
    background: #fff;
}

.prop-list {
    flex: 1;
    display: grid;
    grid-template-columns: 16px 1fr;
    grid-auto-rows: 24px;
    align-items: center;
    column-gap: 3px;
    padding: 0 2px 0 1px;
}

.wheel {
    width: 16px;
    height: 16px;
    border-radius: 50%;
    background: conic-gradient(#f9b233 0 45deg, #ef7a4a 0 90deg, #e84d8a 0 135deg, #8b56d9 0 190deg, #4198ea 0 240deg, #3fc5b0 0 290deg, #78d94f 0 330deg, #f6e34d 0);
}

/* Model space */
.viewport {
    position: relative;
    flex: 1;
    min-height: 0;
    background: var(--canvas);
}

.drawing {
    width: 100%;
    height: 100%;
    overflow: visible;
}

.curve {
    fill: none;
    stroke: #fff;
    stroke-width: 3.5;
}

.dim {
    fill: none;
    stroke: #0cce12;
}

.dim .arrow {
    fill: var(--green);
    stroke: none;
}

.dim text {
    fill: #20cc24;
    stroke: none;
    font: italic 300 25px Roboto, sans-serif;
}

.marker {
    fill: none;
    stroke: var(--red);
    stroke-width: 4;
    stroke-linecap: round;
    stroke-linejoin: round;
}

.marker.heavy {
    stroke-width: 6;
}

.thin {
    fill: none;
    stroke: #eef0f2;
}

.view-label {
    position: absolute;
    top: 5px;
    left: 4px;
}

.view-window {
    position: absolute;
    top: 8px;
    right: 11px;
    display: flex;
    gap: 8px;
}

.viewcube {
    position: absolute;
    top: 31px;
    right: 12px;
    width: 76px;
    height: 80px;
    display: grid;
    grid-template: 25px 30px 25px / 23px 30px 23px;
    place-items: center;
    color: #b4b7bb;
    background: radial-gradient(circle, transparent 28px, #434955 29px 34px, transparent 35px);
}

.north,
.south {
    grid-column: 2;
}

.north {
    align-self: start;
}

.south {
    align-self: end;
}

.west {
    grid-column: 1;
    justify-self: start;
}

.east {
    justify-self: end;
}

.face {
    width: 30px;
    height: 30px;
    border: 2px solid #b4babb;
    background: #9da2a4;
    color: #555b60;
    font-size: 18px;
}

.wcs {
    position: absolute;
    top: 122px;
    right: 27px;
    display: flex;
    align-items: center;
    gap: 5px;
    height: 18px;
    padding: 0 4px;
    border: 1px solid #a7a9b3;
    border-radius: 4px;
    background: #8c8e99;
    color: #50535e;
    font-size: 11px;
}

.navbar {
    position: absolute;
    top: 165px;
    right: 4px;
    width: 33px;
    height: 213px;
    display: flex;
    flex-direction: column;
    align-items: center;
    justify-content: space-between;
    padding: 2px;
    border-radius: 4px;
    background: #51575f;
}

.navbar svg {
    stroke: #393e47;
}

.navbar .corner {
    align-self: flex-end;
}

.navbar .caret {
    background: #393e47;
}

/* Status bar */
.statusbar {
    display: flex;
    justify-content: space-between;
    height: 27px;
    border-top: 1px solid #4b505a;
}

.layouts {
    display: flex;
    padding-left: 8px;
    color: #aeb3bd;
}

.layouts a,
.layouts button {
    height: 18px;
    padding: 0 10px;
    background: #323844;
    clip-path: polygon(0 0, 100% 0, 88% 90%, 80% 100%, 18% 100%, 10% 90%);
    line-height: 18px;
}

.layouts .active {
    padding: 0 14px;
    background: var(--panel);
    color: #fff;
    font-weight: 700;
}

.layouts button {
    padding: 0 8px;
    margin-left: 3px;
    font-size: 18px;
}

.status-tools {
    display: flex;
    gap: 3px;
    padding: 1px 3px 1px 0;
}

.group {
    display: flex;
    align-items: center;
    background: var(--panel);
}

.group.wide {
    padding: 0 2px;
}

.group button {
    width: 24px;
    height: 23px;
    display: grid;
    place-items: center;
}

.group button svg {
    width: 18px;
    height: 18px;
    fill: none;
    stroke: #dfe2e6;
}

.group .on {
    background: var(--blue);
}

.group .text {
    width: 26px;
    white-space: nowrap;
}

.group .scale {
    width: 22px;
}

.group .model {
    font-weight: 700;
}

.group .caret {
    margin: 0 4px 0 3px;
}
```
